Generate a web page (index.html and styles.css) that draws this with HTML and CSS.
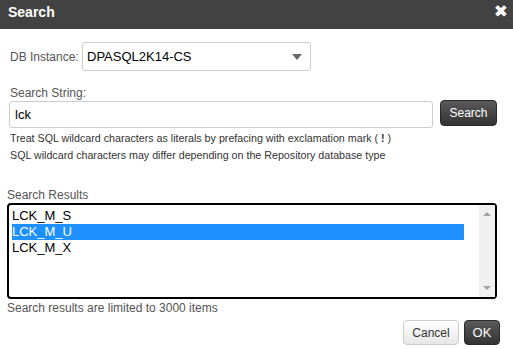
FILE: index.html
```html
<!DOCTYPE html>
<html>
<head>
<meta charset="utf-8">
<link rel="stylesheet" href="styles.css">
</head>
<body>
<div class="dialog">
  <div class="titlebar">
    <span class="title">Search</span>
    <span class="close">&#10006;</span>
  </div>
  <div class="content">
    <div class="row-instance">
      <label class="lbl">DB Instance:</label>
      <div class="select">
        <span class="select-value">DPASQL2K14-CS</span>
        <span class="caret"></span>
      </div>
    </div>
    <div class="lbl lbl-block">Search String:</div>
    <div class="row-search">
      <div class="input">lck</div>
      <button class="btn btn-dark btn-search">Search</button>
    </div>
    <div class="help help-first">Treat SQL wildcard characters as literals by prefacing with exclamation mark ( <b>!</b> )</div>
    <div class="help">SQL wildcard characters may differ depending on the Repository database type</div>
    <div class="lbl lbl-results">Search Results</div>
    <div class="listbox">
      <div class="items">
        <div class="item">LCK_M_S</div>
        <div class="item selected">LCK_M_U</div>
        <div class="item">LCK_M_X</div>
      </div>
      <div class="scrollbar">
        <span class="arrow up"></span>
        <span class="arrow down"></span>
      </div>
    </div>
    <div class="note">Search results are limited to 3000 items</div>
    <div class="footer">
      <button class="btn btn-light">Cancel</button>
      <button class="btn btn-dark btn-ok">OK</button>
    </div>
  </div>
</div>
</body>
</html>
```
FILE: styles.css
```css
* { box-sizing: border-box; }
html, body { margin: 0; padding: 0; background: #fff; }
body { font-family: "Liberation Sans", Arial, sans-serif; width: 513px; height: 349px; overflow: hidden; }
.titlebar {
  height: 29px;
  background: #424242;
  color: #fff;
  display: flex;
  align-items: center;
  justify-content: space-between;
  padding: 0 5px 6px 8px;
}
.title { font-weight: bold; font-size: 14px; }
.close { font-size: 17px; font-weight: bold; line-height: 1; font-family: "DejaVu Sans", sans-serif; }
.content { padding: 0 13px 0 9px; }
.row-instance { display: flex; align-items: center; margin-top: 13px; height: 29px; }
.lbl { color: #555; font-size: 12px; white-space: nowrap; }
.row-instance .lbl { margin-left: 1px; width: 72px; flex: none; }
.select {
  width: 229px; height: 29px;
  border: 1px solid #ccc; border-radius: 3px;
  display: flex; align-items: center; justify-content: space-between;
  padding: 0 8px 0 4px;
}
.select-value { font-size: 13px; color: #000; }
.caret { width: 0; height: 0; border-left: 5px solid transparent; border-right: 5px solid transparent; border-top: 6px solid #666; }
.lbl-block { margin-top: 15px; margin-left: 1px; line-height: 15px; }
.row-search { display: flex; align-items: flex-start; }
.input {
  width: 424px; height: 27px;
  border: 1px solid #ccc; border-radius: 3px;
  font-size: 13px; color: #000;
  padding: 5px 0 0 5px;
}
.btn { font-family: "Liberation Sans", Arial, sans-serif; font-size: 12px; border-radius: 4px; cursor: pointer; padding: 0; }
.btn-dark {
  background: linear-gradient(#5a5a5a, #333);
  color: #fff; border: 1px solid #2a2a2a;
}
.btn-search { width: 57px; height: 26px; margin-left: 7px; margin-top: -1px; }
.help { font-size: 10.7px; color: #333; margin-left: 1px; line-height: 17px; }
.help-first { margin-top: 2px; }
.lbl-results { margin-top: 24px; margin-left: -2px; line-height: 15px; }
.listbox {
  margin-left: -2px;
  width: 490px; height: 96px;
  border: 2px solid #000; border-radius: 4px;
  display: flex;
}
.items { flex: 1; padding: 3px 15px 0 3px; }
.item { font-size: 13px; color: #000; height: 16px; line-height: 16px; }
.item.selected { background: #1e90ff; color: #fff; }
.scrollbar {
  width: 16px; background: #f0f0f0;
  display: flex; flex-direction: column; justify-content: space-between; align-items: center;
  padding: 7px 0 7px;
}
.arrow { width: 0; height: 0; border-left: 4px solid transparent; border-right: 4px solid transparent; }
.arrow.up { border-bottom: 4px solid #a3a3a3; }
.arrow.down { border-top: 4px solid #a3a3a3; }
.note { font-size: 12px; color: #555; margin-left: -2px; line-height: 17px; margin-top: 1px; }
.footer { display: flex; justify-content: flex-end; gap: 5px; margin-top: 3px; }
.btn-light {
  width: 56px; height: 25px;
  background: linear-gradient(#fff, #e6e6e6);
  border: 1px solid #ccc; color: #333;
}
.btn-ok { width: 36px; height: 25px; font-size: 13px; }
```
